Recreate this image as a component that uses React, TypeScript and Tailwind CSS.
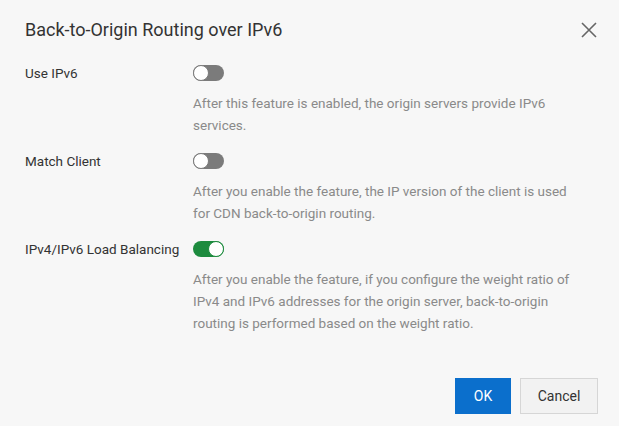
interface SwitchProps {
  checked: boolean;
}

function Switch({ checked }: SwitchProps) {
  return (
    <span
      className={`relative inline-flex h-[16px] w-[31px] items-center rounded-full ${
        checked ? "bg-[#1d8b3e] justify-end" : "bg-[#7b7b7b] justify-start"
      }`}
    >
      <span
        className={`h-[16px] w-[16px] rounded-full border bg-white ${
          checked ? "border-[#1d8b3e]" : "border-[#7b7b7b]"
        }`}
      />
    </span>
  );
}

const rows = [
  {
    label: "Use IPv6",
    checked: false,
    desc: "After this feature is enabled, the origin servers provide IPv6 services.",
  },
  {
    label: "Match Client",
    checked: false,
    desc: "After you enable the feature, the IP version of the client is used for CDN back-to-origin routing.",
  },
  {
    label: "IPv4/IPv6 Load Balancing",
    checked: true,
    desc: "After you enable the feature, if you configure the weight ratio of IPv4 and IPv6 addresses for the origin server, back-to-origin routing is performed based on the weight ratio.",
  },
];

export default function App() {
  return (
    <div
      className="flex h-[426px] w-[619px] flex-col bg-[#f7f7f7] text-[#333]"
      style={{ fontFamily: "Roboto, 'Liberation Sans', sans-serif" }}
    >
      <div className="flex items-start justify-between pl-[25px] pr-[22px] pt-[17px]">
        <h1 className="text-[18px] leading-[26px] font-normal text-[#333]">
          Back-to-Origin Routing over IPv6
        </h1>
        {/* close */}
        <button className="mt-[5px] flex h-[16px] w-[16px] items-center justify-center">
          <svg width="16" height="16" viewBox="0 0 16 16" fill="none" stroke="#666" strokeWidth="1.6">
            <path d="M1 1L15 15M15 1L1 15" />
          </svg>
        </button>
      </div>

      <div className="mt-[19px] flex flex-col gap-[14px] px-[25px]">
        {rows.map((row) => (
          <div key={row.label} className="flex">
            <div className="w-[168px] text-[13.5px] leading-[22px] text-[#333]">{row.label}</div>
            <div className="flex flex-col">
              <div className="mt-[3px] flex">
                <Switch checked={row.checked} />
              </div>
              <p className="mt-[11px] w-[388px] text-[13.5px] leading-[22px] text-[#8a8a8a]">{row.desc}</p>
            </div>
          </div>
        ))}
      </div>

      <div className="mt-auto flex justify-end gap-[9px] pb-[12px] pr-[21px]">
        <button className="h-[36px] w-[56px] bg-[#0b6fcc] text-[14px] text-white">OK</button>
        <button className="h-[36px] w-[78px] border border-[#d6d6d6] bg-[#f2f2f2] text-[14px] text-[#333]">
          Cancel
        </button>
      </div>
    </div>
  );
}
